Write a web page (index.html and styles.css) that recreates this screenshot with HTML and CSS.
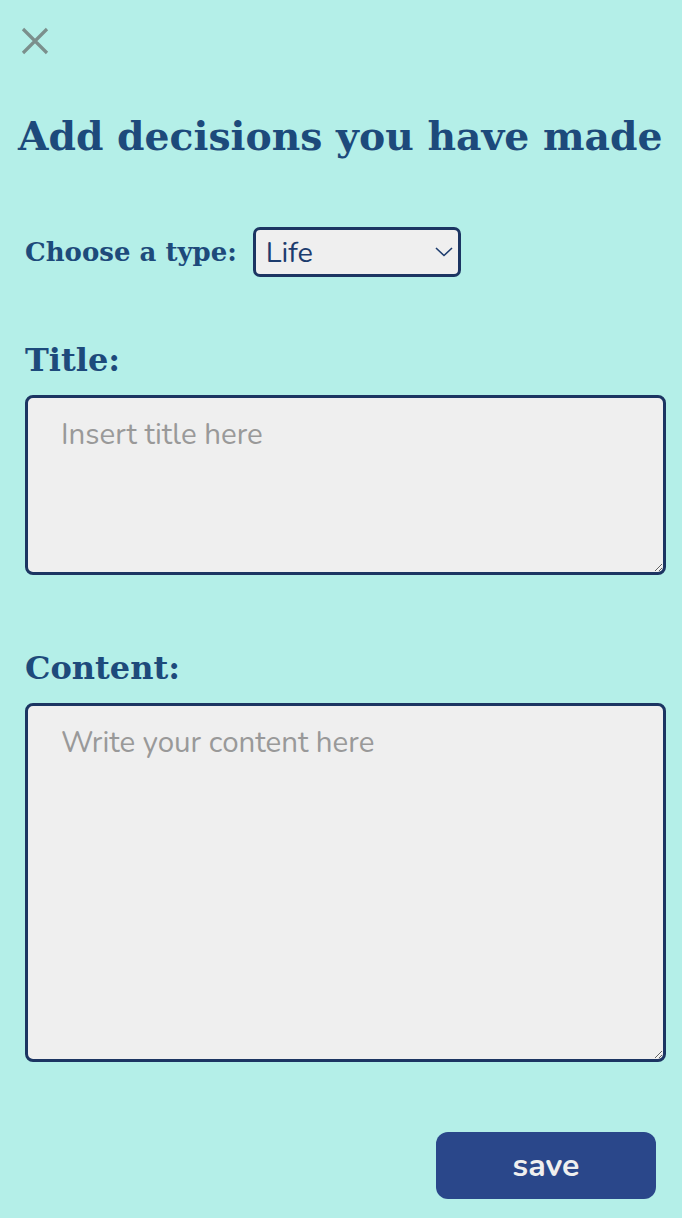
FILE: index.html
```html
<!DOCTYPE html>
<html lang="en">
<head>
<meta charset="utf-8">
<title>Add decisions</title>
<link rel="stylesheet" href="styles.css">
</head>
<body>
<main class="page">
  <button class="close" aria-label="Close">
    <svg width="30" height="30" viewBox="0 0 30 30"><path d="M3 3 L27 27 M27 3 L3 27" stroke="#7b8f8c" stroke-width="3.2" stroke-linecap="butt" fill="none"/></svg>
  </button>
  <h1 class="heading">Add decisions you have made</h1>
  <div class="type-row">
    <label class="label-sm" for="type">Choose a type:</label>
    <div class="select-wrap">
      <select id="type" class="select">
        <option>Life</option>
        <option>Work</option>
      </select>
      <svg class="chevron" width="18" height="10" viewBox="0 0 18 10"><path d="M1 1 L9 8.5 L17 1" stroke="#1d3c6e" stroke-width="1.6" fill="none"/></svg>
    </div>
  </div>
  <label class="label-lg" for="title">Title:</label>
  <textarea id="title" class="field field-title" placeholder="Insert title here"></textarea>
  <label class="label-lg label-content" for="content">Content:</label>
  <textarea id="content" class="field field-content" placeholder="Write your content here"></textarea>
  <div class="actions">
    <button class="save">save</button>
  </div>
</main>
</body>
</html>
```
FILE: styles.css
```css
html, body {
  margin: 0;
  padding: 0;
  background: #b4efe8;
}
.page {
  display: flex;
  flex-direction: column;
  padding: 26px 16px 0 25px;
  width: 641px;
}
.close {
  width: 30px;
  height: 30px;
  padding: 0;
  margin-left: -5px;
  border: none;
  background: transparent;
  display: flex;
}
.heading {
  font-family: "DejaVu Serif", serif;
  font-weight: bold;
  font-size: 39.3px;
  color: #1d4a7b;
  margin: 57px 0 0 -7px;
  line-height: 46px;
  white-space: nowrap;
}
.type-row {
  display: flex;
  align-items: center;
  gap: 16px;
  margin-top: 68px;
}
.label-sm, .label-lg {
  font-family: "DejaVu Serif", serif;
  font-weight: bold;
  color: #1d4a7b;
}
.label-sm {
  font-size: 26px;
}
.label-lg {
  font-size: 32px;
  margin-top: 64px;
  margin-bottom: 16px;
  line-height: 38px;
}
.label-content {
  margin-top: 74px;
}
.select-wrap {
  position: relative;
}
.select {
  appearance: none;
  -webkit-appearance: none;
  width: 208px;
  height: 50px;
  box-sizing: border-box;
  border: 3px solid #1c3562;
  border-radius: 7px;
  background: #efefef;
  font-family: "Nunito", "Lato", sans-serif;
  font-size: 29px;
  color: #1d3c6e;
  padding: 0 10px;
}
.chevron {
  position: absolute;
  right: 8px;
  top: 20px;
  pointer-events: none;
}
.field {
  display: block;
  width: 641px;
  box-sizing: border-box;
  border: 3px solid #1c3562;
  border-radius: 8px;
  background: #efefef;
  font-family: "Nunito", "Lato", sans-serif;
  font-size: 29.5px;
  color: #333;
  padding: 16px 33px;
  margin: 0;
}
.field::placeholder {
  color: #999999;
}
.field-title {
  height: 180px;
}
.field-content {
  height: 359px;
}
.actions {
  display: flex;
  justify-content: flex-end;
  margin-top: 70px;
  padding-right: 10px;
}
.save {
  width: 220px;
  height: 67px;
  border: none;
  border-radius: 12px;
  background: #2a478a;
  color: #efefef;
  font-family: "Nunito", "Lato", sans-serif;
  font-weight: bold;
  font-size: 32px;
}
```
